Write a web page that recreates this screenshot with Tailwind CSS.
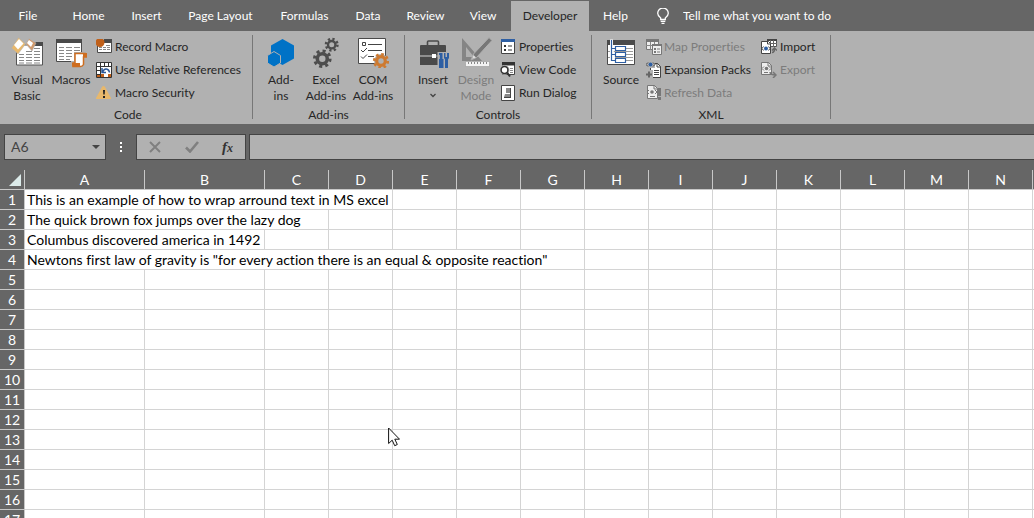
<!DOCTYPE html>
<html lang="en">
<head>
<meta charset="utf-8">
<title>Spreadsheet</title>
<script src="https://cdn.jsdelivr.net/npm/@tailwindcss/browser@4"></script>
</head>
<body class="flex h-screen flex-col overflow-hidden bg-[#666666] font-['Lato','Open_Sans',sans-serif] text-[12px] leading-4 text-[#262626] [font-variant-ligatures:none]">

<!-- Tabs -->
<nav class="flex h-[31px] shrink-0 items-stretch pt-px whitespace-nowrap text-white">
  <button class="w-14">File</button>
  <button class="w-[65px]">Home</button>
  <button class="w-[51px]">Insert</button>
  <button class="w-[97px]">Page Layout</button>
  <button class="w-[71px]">Formulas</button>
  <button class="w-14">Data</button>
  <button class="w-[59px]">Review</button>
  <button class="w-14">View</button>
  <button class="w-[78px] bg-[#b1b1b1] text-[#262626]">Developer</button>
  <button class="w-[53px]">Help</button>
  <label class="flex flex-1 items-center gap-3 pl-[13px]">
    <svg class="size-4 shrink-0" viewBox="0 0 16 16" fill="none" stroke="#fff" stroke-width="1.3"><path d="M5.7 11.5V10C4 8.800 2.700 7.400 2.700 5.300a5.300 5.300 0 0 1 10.600 0c0 2.100-1.300 3.500-3 4.700v1.500zM5.700 13.300h4.600M6.500 15.300h3"/></svg>
    <input class="min-w-0 flex-1 bg-transparent outline-none placeholder:text-white" placeholder="Tell me what you want to do" aria-label="Tell me what you want to do">
  </label>
</nav>

<!-- Ribbon -->
<div class="flex h-[93px] shrink-0 bg-[#b1b1b1] pt-1 whitespace-nowrap">
  <section class="flex w-[253px] flex-col border-r border-[#777777] mb-[5px] pl-1">
    <div class="flex h-[69px]">
      <button class="flex w-[46px] flex-col items-center pt-px">
        <svg class="mb-1 size-8 shrink-0" viewBox="0 0 32 32"><path d="M5.500 9h26v20h-26z" fill="#fff" stroke="#555" /><path d="M22 6h10v4H22z" fill="#4a4a4a"/><path d="M8 18.500h5m2 0h6m2 0h6M8 21.500h5m2 0h6m2 0h6M8 24.500h5m2 0h6m2 0h6M15 15.500h6m2 0h6M23 12.500h6M8 27h5m2 0h6m2 0h6" stroke="#888"/><path d="M7.500 1.500 14.500 8 7 18 .5 12z" fill="#e8b86c" stroke="#b1b1b1" stroke-width=".6"/><path d="m8 3 4.500 4.500L7 13.500 3 9z" fill="#fff"/><path d="m18 2.500 7 4.500-4 8-6-7z" fill="#d09a6c" stroke="#b1b1b1" stroke-width=".6"/><path d="m18 4 4 3-2 4-4-4z" fill="#fff"/></svg>
        <span>Visual<br>Basic</span>
      </button>
      <button class="flex w-[42px] flex-col items-center pt-px">
        <svg class="mb-1 size-8 shrink-0" viewBox="0 0 32 32"><path d="M1.500 3.500h25v22h-25z" fill="#fff" stroke="#4a4a4a"/><path d="M1 3h26v4H1z" fill="#4a4a4a"/><path d="M4 11.500h5m2 0h6m2 0h6M4 14.500h5m2 0h6m2 0h6M4 17.500h5m2 0h6M4 20.500h5m2 0h6M4 23.500h5m2 0h4" stroke="#888"/><path d="M19 16h13v5h-2v10H16v-6h3z" fill="#b1b1b1"/><path d="M20 17.500h10.500q1 0 1 3.500h-3v7.500q-1 2-3 2h-7.500V27H20z" fill="#fff" stroke="#ce6d1f" stroke-width="1.500"/><path d="M17 27h8v4h-7q-1-1-1-4zM28 17h4v4h-4z" fill="#ce6d1f"/></svg>
        <span>Macros</span>
      </button>
      <div class="ml-1 flex flex-col">
        <button class="flex h-[23px] items-center gap-[3px]">
          <svg class="size-4" viewBox="0 0 16 16"><path d="M1.500 1.500h14v12h-14z" fill="#fff" stroke="#4a4a4a"/><path d="M8 0h8v4H8z" fill="#4a4a4a"/><path d="M3 8.500h3m1 0h3m1 0h3M3 10.500h3m1 0h3m1 0h3M10 6.500h4" stroke="#888"/><circle cx="4" cy="3.500" r="4.500" fill="#c0601a"/></svg>
          <span>Record Macro</span>
        </button>
        <button class="flex h-[23px] items-center gap-[3px]">
          <svg class="size-4" viewBox="0 0 16 16"><path d="M.5.500h15v15H.5z" fill="#fff" stroke="#333"/><path d="M4.500 0v16M8.500 0v5M12.500 0v5M0 4.500h16M0 8.500h5M0 12.500h5" stroke="#333"/><path d="M5 5h10v7H5z" fill="#fff"/><path d="M1 13h3v2H1zM5 12h3v3H5zM12 12h3v3h-3z" fill="#c0601a"/><path d="M6.500 10q1.500-3.500 4-3t3 3.500M6 6v4.500h4" fill="none" stroke="#2b5797" stroke-width="1.500"/></svg>
          <span>Use Relative References</span>
        </button>
        <button class="flex h-[23px] items-center gap-[3px]">
          <svg class="size-4" viewBox="0 0 16 16"><path d="M7.500 1q1 0 1.500 1l6 11v1H0v-1L6 2q.5-1 1.500-1z" fill="#e8b86c"/><path d="M7 5h2l-.3 4.500H7.300zM7 11h2v2H7z" fill="#222"/></svg>
          <span>Macro Security</span>
        </button>
      </div>
    </div>
    <h2 class="pt-[3px] text-center">Code</h2>
  </section>

  <section class="flex w-[152px] flex-col border-r border-[#777777] mb-[5px]">
    <div class="flex h-[69px] pl-[7px]">
      <button class="flex w-[42px] flex-col items-center pt-px">
        <svg class="mb-1 size-8 shrink-0" viewBox="0 0 32 32" fill="#0072c6"><path d="m17.500 3 11.500 6.500v13L17.500 29 6 22.500v-13z"/><path d="m9 15.500 6.500 4v7.500L9 31l-6.500-4v-7.500z" stroke="#b1b1b1"/></svg>
        <span>Add-<br>ins</span>
      </button>
      <button class="flex w-12 flex-col items-center pt-px">
        <svg class="mb-1 size-8 shrink-0" viewBox="0 0 32 32" fill="none" stroke="#4d4d4d"><circle cx="12.300" cy="22.700" r="5" stroke-width="3.600"/><circle cx="12.300" cy="22.700" r="7.800" stroke-width="3" stroke-dasharray="3.060 3.066"/><circle cx="21.700" cy="8.700" r="3.700" stroke-width="2.400"/><circle cx="21.700" cy="8.700" r="5.700" stroke-width="2.600" stroke-dasharray="2.200 2.276"/></svg>
        <span>Excel<br>Add-ins</span>
      </button>
      <button class="flex w-[46px] flex-col items-center pt-px">
        <svg class="mb-1 size-8 shrink-0" viewBox="0 0 32 32" fill="none"><path d="M1.500 2.500h27v25h-27z" fill="#fff" stroke="#4a4a4a"/><path d="M5.500 6.500h3v3h-3zM11 8.500h14M11 14.500h14M11 20.500h6M4 14l2 2 4-4M4 20.500l2 2 4-4" stroke="#444"/><circle cx="24" cy="25" r="7" fill="#b1b1b1"/><g stroke="#ce7a30"><circle cx="24" cy="25" r="4.300" stroke-width="3.200"/><circle cx="24" cy="25" r="6.700" stroke-width="2.800" stroke-dasharray="2.600 2.662"/></g></svg>
        <span>COM<br>Add-ins</span>
      </button>
    </div>
    <h2 class="pt-[3px] text-center">Add-ins</h2>
  </section>

  <section class="flex w-[187px] flex-col border-r border-[#777777] mb-[5px]">
    <div class="flex h-[69px] pl-[7px]">
      <button class="flex w-[42px] flex-col items-center pt-px">
        <svg class="mb-1 size-8 shrink-0" viewBox="0 0 32 32"><path d="M10.500 9V6q0-1 1-1h9q1 0 1 1v3" fill="none" stroke="#4a4a4a" stroke-width="1.600"/><path d="M4 9h24q1 0 1 1v9.500H3V10q0-1 1-1zM3 20.500h26V29H3z" fill="#4a4a4a"/><path d="M3 20h12" stroke="#b1b1b1" stroke-width=".7"/><path d="M15 18h4v4h-4z" fill="#fff"/><path d="M20.500 16h12v16h-12z" fill="#b1b1b1"/><path d="M22 17h3.500v6h1v9.500H22V23h.8v-4H22zM27 17h1.500v4h1.500v-4H32v5l-1 1.500V32h-3v-8.500L27 22z" fill="#2e5fa3"/></svg>
        <span>Insert</span>
        <svg class="mt-[5px] h-[5px] w-2" viewBox="0 0 8 5" fill="none" stroke="#444" stroke-width="1.300"><path d="m1.500 1 2.500 2.500 2.500-2.500"/></svg>
      </button>
      <button class="flex w-11 flex-col items-center pt-px text-[#7c7c7c]">
        <svg class="mb-1 size-8 shrink-0" viewBox="0 0 32 32"><path d="M2 2v23h20zM6 11l8 10H6z" fill="#858585" fill-rule="evenodd"/><path d="m29 1.500 3 3-15.500 17L11 24l2.500-6z" fill="#777" stroke="#b1b1b1"/><path d="m12 23 1.500-4 2.500 2.500z" fill="#ddd"/><path d="M5.500 25.500h24v5h-24z" fill="#f3f3f3" stroke="#999" stroke-width=".6"/><path d="M8.500 26v2m3-2v2m3-2v2m3-2v2m3-2v2m3-2v2m3-2v2" stroke="#888"/></svg>
        <span>Design<br>Mode</span>
      </button>
      <div class="ml-[2px] flex flex-col">
        <button class="flex h-[23px] items-center gap-[3px]">
          <svg class="size-4" viewBox="0 0 16 16"><path d="M1.500.500h13v14h-13z" fill="#fff" stroke="#444"/><path d="M1 0h14v3H1z" fill="#2e5fa3"/><path d="M4 6h2v2H4zM4 10h2v2H4zM8 6.500h4v1H8zM8 10.500h4v1H8z" fill="#333"/></svg>
          <span>Properties</span>
        </button>
        <button class="flex h-[23px] items-center gap-[3px]">
          <svg class="size-4" viewBox="0 0 16 16" fill="none"><path d="M2.500.500h12v12h-12z" fill="#fff" stroke="#444"/><path d="M2 0h13v3.500H2z" fill="#333"/><path d="M10 6.500h3M10 8.500h3M10 10.500h3" stroke="#888"/><circle cx="4.500" cy="8" r="5" fill="#b1b1b1"/><circle cx="4.500" cy="8" r="3.400" fill="#fff" stroke="#333" stroke-width="1.500"/><path d="m7 10.500 3 4" stroke="#333" stroke-width="2"/></svg>
          <span>View Code</span>
        </button>
        <button class="flex h-[23px] items-center gap-[3px]">
          <svg class="size-4" viewBox="0 0 16 16"><path d="M1.500.500h13v15h-13z" fill="#fff" stroke="#444"/><path d="M6 3h4v5H6zM5 9h5v3H4z" fill="#888"/><path d="M10 3h1v10h-1zM4 12h7v1H4z" fill="#444"/></svg>
          <span>Run Dialog</span>
        </button>
      </div>
    </div>
    <h2 class="pt-[3px] text-center">Controls</h2>
  </section>

  <section class="flex w-[239px] flex-col border-r border-[#777777] mb-[5px]">
    <div class="flex h-[69px] pl-2">
      <button class="flex w-[42px] flex-col items-center pt-px">
        <svg class="mb-1 size-8 shrink-0" viewBox="0 0 32 32" fill="none"><path d="M2.500 4.500h27v24h-27z" fill="#fff" stroke="#4a4a4a"/><path d="M2 4h28v5H2z" fill="#4a4a4a"/><path d="M21 12.500h7M21 18.500h7M21 24.500h7M3 15.500h25M3 21.500h25" stroke="#999"/><path d="M5 3.500h3v22H5z" fill="#fff"/><path d="M6.500 4v20.500h4m-4-6h4m-4-6h4M10.500 10.500h10v4h-10zm0 6h10v4h-10zm0 6h10v4h-10z" fill="#fff" stroke="#2e5fa3" stroke-width="1.200"/></svg>
        <span>Source</span>
      </button>
      <div class="ml-1 flex w-[115px] flex-col">
        <button class="flex h-[23px] items-center gap-[2px] text-[#7c7c7c]">
          <svg class="size-4 shrink-0" viewBox="0 0 16 16" fill="none"><path d="M.5.500h12v10H.5z" fill="#eee" stroke="#777"/><path d="M0 0h13v3H0z" fill="#777"/><path d="M4.500 3v8M8.500 3v8M0 6.500h12" stroke="#888"/><path d="M6.500 5.500h9v10h-9z" fill="#eee" stroke="#777"/><path d="M6 5h10v2H6zM8 9h2v2H8zM8 12h2v2H8zM11 9.500h3v1h-3zM11 12.500h3v1h-3z" fill="#777"/></svg>
          <span>Map Properties</span>
        </button>
        <button class="flex h-[23px] items-center gap-[2px]">
          <svg class="size-4 shrink-0" viewBox="0 0 16 16" fill="none"><path d="M4.500 1.500h7l3 3v11h-10z" fill="#fff" stroke="#444"/><path d="M11 1v4h4M8 8.500h5M8 10.500h5M8 12.500h5" stroke="#444"/><path d="M0 0h9v6H0z" fill="#b1b1b1"/><circle cx="4.500" cy="2.500" r="2" fill="#2e5fa3"/><path d="m2 .5-2 2 2 2m5-4 2 2-2 2" stroke="#444"/><path d="M0 8h7v8H0z" fill="#b1b1b1"/><path d="M0 12.500h6M3 9.500v6" stroke="#666" stroke-width="2"/></svg>
          <span>Expansion Packs</span>
        </button>
        <button class="flex h-[23px] items-center gap-[2px] text-[#7c7c7c]">
          <svg class="size-4 shrink-0" viewBox="0 0 16 16" fill="none"><path d="M1.500.500h7l3 3v10h-10z" fill="#eee" stroke="#777"/><path d="M8 0v4h4M4 11.500h5" stroke="#777"/><circle cx="6" cy="7" r="1.800" fill="#777"/><path d="m3 5-2 2 2 2m6-4 2 2-2 2" stroke="#777"/><path d="M12 3h3v8h-3zM12 12h3v3h-3z" fill="#777"/></svg>
          <span>Refresh Data</span>
        </button>
      </div>
      <div class="flex flex-col">
        <button class="flex h-[23px] items-center gap-[3px]">
          <svg class="size-4 shrink-0" viewBox="0 0 16 16" fill="none"><path d="M6.500.500h9v7h-9z" fill="#fff" stroke="#555"/><path d="M6 0h10v2H6z" fill="#444"/><path d="M9.500 1v7M12.500 1v7M6 4.500h10" stroke="#666"/><path d="M.5 2.500h7l2 2v10H.5z" fill="#fff" stroke="#444"/><path d="M6.500 2v3h3" stroke="#444"/><circle cx="5" cy="9.500" r="2" fill="#2e5fa3"/><path d="m2.500 7.500-1.500 2 1.500 2m5-4 1.500 2-1.500 2" stroke="#444"/><path d="M11 13.500q2.500 0 2.500-4m-2.500 2 2.500-2.500 2.500 2.500" stroke="#666" stroke-width="1.500"/></svg>
          <span>Import</span>
        </button>
        <button class="flex h-[23px] items-center gap-[3px] text-[#7c7c7c]">
          <svg class="size-4 shrink-0" viewBox="0 0 16 16" fill="none"><path d="M.5.500h7l3 3v9H.5z" fill="#eee" stroke="#777"/><path d="M7 0v4h4M3 10.500h4" stroke="#777"/><circle cx="5.500" cy="6.500" r="1.800" fill="#777"/><path d="m3 4.500-2 2 2 2m5-4 2 2-2 2" stroke="#777"/><path d="M9 10q0 3 6 3m-3-3 3 3-3 3" stroke="#777" stroke-width="1.500"/></svg>
          <span>Export</span>
        </button>
      </div>
    </div>
    <h2 class="pt-[3px] text-center">XML</h2>
  </section>
</div>

<!-- Formula bar -->
<div class="flex h-[46px] shrink-0 items-center">
  <div class="ml-1 flex h-[26px] w-[102px] items-center border border-[#444444] bg-[#b1b1b1] pr-[5px] pl-1.5">
    <input class="min-w-0 flex-1 bg-transparent text-[14px] text-[#444444] outline-none" value="A6" aria-label="Name box">
    <button aria-label="Open name list"><svg class="h-1 w-2" viewBox="0 0 8 4"><path d="M0 0h8L4 4z" fill="#444"/></svg></button>
  </div>
  <svg class="ml-[13px] h-3 w-1" viewBox="0 0 4 12" fill="#fff"><path d="M1 1h2v2H1zM1 5h2v2H1zM1 9h2v2H1z"/></svg>
  <div class="ml-[13px] flex h-[26px] w-[110px] items-center justify-between border border-[#444444] bg-[#b1b1b1] px-3">
    <button aria-label="Cancel"><svg class="size-3" viewBox="0 0 12 12" stroke="#808080" stroke-width="2"><path d="m1 1 10 10M11 1 1 11"/></svg></button>
    <button aria-label="Enter"><svg class="h-3 w-[14px]" viewBox="0 0 14 12" fill="none" stroke="#808080" stroke-width="2.600"><path d="m1 6.500 4 4L13 1"/></svg></button>
    <button class="font-['Liberation_Serif',serif] text-[15px] font-bold text-[#333333] italic" aria-label="Insert function">f<span class="text-[12px]">x</span></button>
  </div>
  <input class="ml-[3px] h-[26px] min-w-0 flex-1 border border-r-0 border-[#444444] bg-[#b1b1b1] px-2 outline-none" aria-label="Formula">
</div>

<!-- Sheet -->
<main class="min-h-0 flex-1 overflow-hidden bg-white">
  <table class="w-full table-fixed border-separate border-spacing-0 text-[14px] leading-[18px] whitespace-nowrap text-black [&_td]:border-r [&_td]:border-b [&_td]:border-[#d4d4d4] [&_td]:p-0 [&_td]:pl-[2px] [&_th]:border-r [&_th]:border-b [&_th]:border-[#c8c8c8] [&_th]:bg-[#666666] [&_th]:p-0 [&_th]:font-normal [&_th]:text-white [&_tr]:h-5 [&_tr>*:last-child]:border-r-0 [&_tr>*:last-child]:pl-0">
    <colgroup id="cols"><col class="w-[25px]"><col class="w-[120px]"><col class="w-[120px]"></colgroup>
    <thead><tr id="head"><th aria-label="Select all"><svg class="ml-auto mr-[3px] size-3" viewBox="0 0 12 12"><path d="M12 0v12H0z" fill="#dcebea"/></svg></th></tr></thead>
    <tbody id="rows"></tbody>
  </table>
</main>

<svg class="pointer-events-none absolute top-[427px] left-[388px] h-5 w-3" viewBox="0 0 12 20"><path d="M.6 1v15.500l3.600-3.300 2.500 5.500 2.600-1.200-2.500-5.300h4.700z" fill="#fff" stroke="#111"/></svg>

<script>
const letters = 'ABCDEFGHIJKLMN'.split('');
const cells = {
  1: ['This is an example of how to wrap arround text in MS excel', 4],
  2: ['The quick brown fox jumps over the lazy dog', 3],
  3: ['Columbus discovered america in 1492', 2],
  4: ['Newtons first law of gravity is "for every action there is an equal & opposite reaction"', 7]
};
const cols = document.getElementById('cols');
const head = document.getElementById('head');
const rows = document.getElementById('rows');
letters.forEach((l, i) => {
  if (i > 1) { const c = document.createElement('col'); c.className = 'w-[64px]'; cols.append(c); }
  const th = document.createElement('th'); th.scope = 'col'; th.textContent = l; head.append(th);
});
cols.append(document.createElement('col'));
head.append(document.createElement('th'));
for (let r = 1; r <= 17; r++) {
  const tr = document.createElement('tr');
  const th = document.createElement('th'); th.scope = 'row'; th.textContent = r; tr.append(th);
  let n = letters.length + 1;
  if (cells[r]) {
    const td = document.createElement('td');
    td.textContent = cells[r][0]; td.colSpan = cells[r][1]; tr.append(td);
    n -= cells[r][1];
  }
  while (n-- > 0) tr.append(document.createElement('td'));
  rows.append(tr);
}
</script>
</body>
</html>
